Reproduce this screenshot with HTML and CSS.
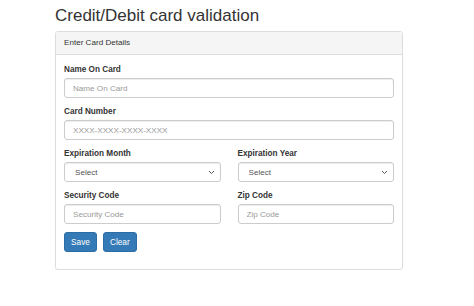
FILE: index.html
```html
<!DOCTYPE html>
<html lang="en">
<head>
    <meta charset="UTF-8">
    <meta name="viewport" content="width=device-width, initial-scale=1.0">
    <title>Credit/Debit card validation</title>
    <link rel="stylesheet" href="styles.css">
</head>
<body>
    <div class="container">
        <h1>Credit/Debit card validation</h1>

        <div class="panel">
            <div class="panel-heading">Enter Card Details</div>
            <div class="panel-body">
                <div class="form-group">
                    <label for="name">Name On Card</label>
                    <input type="text" id="name" class="form-control" placeholder="Name On Card">
                </div>
                <div class="form-group">
                    <label for="number">Card Number</label>
                    <input type="text" id="number" class="form-control" placeholder="XXXX-XXXX-XXXX-XXXX">
                </div>
                <div class="row">
                    <div class="form-group">
                        <label for="month">Expiration Month</label>
                        <div class="select-wrap">
                            <select id="month" class="form-control">
                                <option>Select</option>
                            </select>
                            <svg class="chevron" width="7" height="5" viewBox="0 0 7 5"><path d="M1 1 L3.5 3.5 L6 1" fill="none" stroke="#555" stroke-width="1"/></svg>
                        </div>
                    </div>
                    <div class="form-group">
                        <label for="year">Expiration Year</label>
                        <div class="select-wrap">
                            <select id="year" class="form-control">
                                <option>Select</option>
                            </select>
                            <svg class="chevron" width="7" height="5" viewBox="0 0 7 5"><path d="M1 1 L3.5 3.5 L6 1" fill="none" stroke="#555" stroke-width="1"/></svg>
                        </div>
                    </div>
                </div>
                <div class="row">
                    <div class="form-group">
                        <label for="cvv">Security Code</label>
                        <input type="text" id="cvv" class="form-control" placeholder="Security Code">
                    </div>
                    <div class="form-group">
                        <label for="zip">Zip Code</label>
                        <input type="text" id="zip" class="form-control" placeholder="Zip Code">
                    </div>
                </div>
                <div class="buttons">
                    <button class="btn">Save</button>
                    <button class="btn">Clear</button>
                </div>
            </div>
        </div>
    </div>
</body>
</html>
```

FILE: styles.css
```css
body {
    margin: 0;
    font-family: "Liberation Sans", Arial, sans-serif;
    font-size: 8px;
    color: #333;
    background: #fff;
}
.container {
    padding: 0 71px 0 55px;
}
h1 {
    margin: 0;
    padding-top: 6px;
    height: 25px;
    font-size: 17px;
    font-weight: normal;
    line-height: 20px;
    color: #333;
}
.panel {
    border: 1px solid #ddd;
    border-radius: 3px;
    box-shadow: 0 1px 1px rgba(0, 0, 0, 0.05);
}
.panel-heading {
    background-color: #f5f5f5;
    border-bottom: 1px solid #ddd;
    height: 22px;
    line-height: 22px;
    padding: 0 8px;
    font-size: 8.1px;
    color: #333;
}
.panel-body {
    padding: 8px 8px 8px 8px;
}
.form-group {
    margin-bottom: 7px;
}
.form-group label {
    display: block;
    font-weight: bold;
    font-size: 8.2px;
    line-height: 13px;
    height: 13px;
    margin-bottom: 2px;
}
.form-control {
    box-sizing: border-box;
    width: 100%;
    height: 20px;
    border: 1px solid #ccc;
    border-radius: 3px;
    padding: 0 8px;
    font-family: "Liberation Sans", Arial, sans-serif;
    font-size: 8.1px;
    color: #555;
    background: #fff;
    box-shadow: inset 0 1px 1px rgba(0, 0, 0, 0.075);
}
.form-control::placeholder {
    color: #999;
}
.row {
    display: grid;
    grid-template-columns: 1fr 1fr;
    column-gap: 17px;
}
.select-wrap {
    position: relative;
}
select.form-control {
    appearance: none;
    padding-left: 10px;
}
.chevron {
    position: absolute;
    right: 6px;
    top: 8px;
}
.buttons {
    display: flex;
    gap: 6px;
    padding-top: 1px;
    padding-bottom: 9px;
}
.btn {
    height: 20px;
    padding: 0 6px;
    border: 1px solid #2e6da4;
    border-radius: 3px;
    background-color: #337ab7;
    color: #fff;
    font-family: "Liberation Sans", Arial, sans-serif;
    font-size: 8.3px;
    cursor: pointer;
}
```
